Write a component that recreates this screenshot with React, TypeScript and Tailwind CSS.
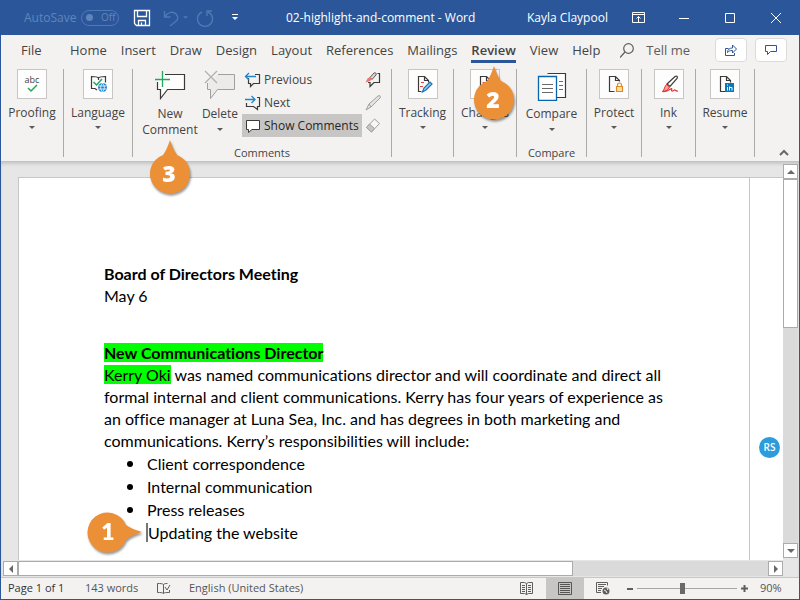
import React from "react";

const tabs = ["Home", "Insert", "Draw", "Design", "Layout", "References", "Mailings", "Review", "View", "Help"];

const Separator = () => <div className="h-[88px] w-px shrink-0 bg-[#acaaa8]" />;

const Caret = () => (
  <svg width="6" height="3" viewBox="0 0 6 3" className="shrink-0">
    <path d="M0 0h6L3 3z" fill="#5c5a58" />
  </svg>
);

/* Orange numbered marker, the tip points up or to the right */
const Callout = ({ n, dir }: { n: string; dir: "up" | "right" }) => (
  <svg width="60" height="60" viewBox="0 0 60 60" className="block drop-shadow-[1px_2px_1px_#00000066]">
    {dir === "up" ? (
      <path d="M30 1c2 6 4 11 7 15a20 20 0 1 1-14 0c3-4 5-9 7-15z" fill="#ec9038" />
    ) : (
      <path d="M58 30c-6 2-12 4-16 8a20 20 0 1 1 0-15c4 3 10 5 16 7z" fill="#ec9038" />
    )}
    <text
      x={dir === "up" ? 29 : 24}
      y={dir === "up" ? 43 : 38}
      textAnchor="middle"
      fontSize="23"
      fontWeight="800"
      fill="#fff"
    >
      {n}
    </text>
  </svg>
);

const icons: Record<string, React.ReactNode> = {
  Proofing: (
    <>
      <text x="14" y="13" textAnchor="middle" fontSize="9" fill="#444">abc</text>
      <path d="M10 18l3 3 6-6" stroke="#22a85a" strokeWidth="1.5" />
    </>
  ),
  Language: (
    <>
      <path d="M14.5 8c-1-1.500-3-1.500-7-1.500v12h3.500l2 1.500M14.5 8c1-1.500 3-1.500 7-1.500v6M14.5 8v2" stroke="#3b3a39" strokeWidth="1.2" />
      <path d="M9.5 12l3 3 5.5-6" stroke="#22a85a" strokeWidth="1.5" />
      <circle cx="18.5" cy="17.5" r="4.5" fill="#1e86d0" />
      <path d="M14.5 16h8M14.5 19h8M18.5 13c-2.500 3-2.500 6 0 9c2.500-3 2.500-6 0-9" stroke="#fff" strokeWidth=".8" />
    </>
  ),
  Tracking: (
    <>
      <path d="M12.5 21.5h-3v-15h6l4 4v2M15.5 6.5v4h4" stroke="#3b3a39" strokeWidth="1.2" />
      <path d="M12 12.5h3M11 16.5h3" stroke="#e8413c" />
      <path d="M13.5 22l1.500-4 6-6 2 2-6 6z" fill="#9bcbf0" stroke="#1e70b8" strokeWidth="1.2" />
    </>
  ),
  Changes: (
    <>
      <path d="M18.5 21.5h-9v-15h6l4 4v11zM15.5 6.5v4h4" stroke="#3b3a39" strokeWidth="1.2" />
      <path d="M11.5 12.5h5M11.5 16.5h5" stroke="#e8413c" strokeWidth="1.2" />
    </>
  ),
  Protect: (
    <>
      <path d="M14.5 21.5h-5v-15h6l4 4v1M15.5 6.5v4h4" stroke="#3b3a39" strokeWidth="1.2" />
      <path d="M17.5 17v-2a2 2 0 0 1 4 0v2" stroke="#e08a2c" strokeWidth="1.2" />
      <path d="M16.5 16.5h6v5h-6z" fill="#ffe29a" stroke="#e08a2c" strokeWidth="1.2" />
    </>
  ),
  Ink: (
    <>
      <path d="M12 14l8-7.500c2-1 3 0 2 2L15 16.500z" fill="#fff" stroke="#3b3a39" strokeWidth="1.2" />
      <path d="M11.500 14.500l3 2.500c-1 3-4 4.500-7 4.500 2-2 2-5 4-7z" fill="#f6a09c" stroke="#e8302c" />
      <path d="M7.500 21.500c5 1 8-3 9-3s-1 3 1 2.500 1.500-1.500 2.500-1 1 1.500 3 1" stroke="#e8302c" strokeWidth="1.2" />
    </>
  ),
  Resume: (
    <>
      <path d="M14 21.5H9.5v-15h6l4 4v2M15.5 6.5v4h4" stroke="#3b3a39" strokeWidth="1.2" />
      <path d="M14 13h9v9h-9z" fill="#0a78b5" />
      <path d="M16.5 17v3.500M16.5 14.500v1M18.500 20.500v-4M18.500 17.500h2.500v3" stroke="#fff" />
    </>
  ),
};

const RibbonMenu = ({ label }: { label: string }) => (
  <button className="flex w-full flex-col items-center">
    <span className="flex size-[30px] items-center justify-center border border-[#c8c6c4] bg-[#fdfdfd]">
      <svg width="28" height="28" viewBox="0 0 28 28" fill="none">{icons[label]}</svg>
    </span>
    <span className="mt-[5px] mb-1 leading-[18px]">{label}</span>
    <Caret />
  </button>
);

const SmallBubble = ({ children, flip }: { children?: React.ReactNode; flip?: boolean }) => (
  <svg width="18" height="17" viewBox="0 0 18 17" fill="none" className="shrink-0">
    {flip ? (
      <path d="M13 3.500h2.500v9h-2v3l-4-3h-7V9" stroke="#3b3a39" strokeWidth="1.2" />
    ) : (
      <path d="M4.500 7v5.500h2v3l3-3h6v-9H11" stroke="#3b3a39" strokeWidth="1.2" />
    )}
    {children}
  </svg>
);

const TitleBar = () => (
  <header className="flex h-[35px] shrink-0 items-center bg-[#2b579a] text-[12px] text-white">
    <div className="flex flex-1 items-center pl-[23px]">
      <span className="w-[57px] text-[#5f85bd]">AutoSave</span>
      <button role="switch" aria-checked="false" aria-label="AutoSave" className="flex h-4 w-[38px] items-center gap-2 rounded-full border border-[#5078b3] pl-1 text-[10px] text-[#5f85bd]">
        <span className="size-[7px] rounded-full bg-[#5f85bd]" />
        Off
      </button>
      <button aria-label="Save" className="ml-3.5">
        <svg width="18" height="18" viewBox="0 0 18 18" fill="none" stroke="#fff" strokeWidth="1.3">
          <path d="M1.500 1.500h15v15h-13l-2-2zM4.500 1.500v6h9v-6M5.500 16.500v-5h7v5M8.500 13.500v3" />
        </svg>
      </button>
      <button aria-label="Undo" className="ml-3 flex items-center gap-1">
        <svg width="16" height="18" viewBox="0 0 16 18" fill="none" stroke="#5078b3" strokeWidth="1.4">
          <path d="M1.500 2v6h6M2 7.500C5 3 10 2 13 5s2 6-1 8l-5 4" />
        </svg>
        <svg width="5" height="3" viewBox="0 0 6 3"><path d="M0 0h6L3 3z" fill="#5078b3" /></svg>
      </button>
      <button aria-label="Redo" className="ml-2">
        <svg width="18" height="18" viewBox="0 0 18 18" fill="none" stroke="#5078b3" strokeWidth="1.4">
          <path d="M11 7V2h5M12 3a7.500 7.500 0 1 1-6 0" />
        </svg>
      </button>
      <button aria-label="Customize Quick Access Toolbar" className="ml-[18px]">
        <svg width="6" height="7" viewBox="0 0 6 7"><path d="M0 0h6v1H0zM0 3h6L3 6z" fill="#fff" /></svg>
      </button>
    </div>
    <h1 className="w-[241px] whitespace-nowrap">02-highlight-and-comment - Word</h1>
    <span className="w-[88px] whitespace-nowrap">Kayla Claypool</span>
    <button aria-label="Ribbon Display Options" className="flex w-[46px] justify-center">
      <svg width="13" height="11" viewBox="0 0 13 11" fill="none" stroke="#fff"><path d="M.5.5h12v10H.5zM.5 2.5h12M6.5 10V4.5M4.5 6.5l2-2 2 2" /></svg>
    </button>
    <button aria-label="Minimize" className="flex w-[46px] justify-center">
      <svg width="10" height="10" viewBox="0 0 10 10" stroke="#fff"><path d="M0 5.5h10" /></svg>
    </button>
    <button aria-label="Maximize" className="flex w-[46px] justify-center">
      <svg width="10" height="10" viewBox="0 0 10 10" fill="none" stroke="#fff"><path d="M.5.5h9v9h-9z" /></svg>
    </button>
    <button aria-label="Close" className="flex w-[46px] justify-center">
      <svg width="10" height="10" viewBox="0 0 10 10" stroke="#fff"><path d="M0 0l10 10M10 0L0 10" /></svg>
    </button>
  </header>
);

const TabRow = () => (
  <nav className="flex h-[34px] shrink-0 items-start text-[13px]">
    <button className="w-[69px] pl-5 text-left leading-[31px]">File</button>
    <div className="flex gap-3.5">
      {tabs.map(tab => (
        <div key={tab} className="relative">
          {tab === "Review" ? (
            <>
              <button className="h-[28px] border-b-[3px] border-[#2b579a] pt-[6px] leading-[19px] font-semibold">{tab}</button>
              <div className="pointer-events-none absolute top-[30px] left-1/2 z-10 -ml-[30px]">
                <Callout n="2" dir="up" />
              </div>
            </>
          ) : (
            <button className="leading-[31px]">{tab}</button>
          )}
        </div>
      ))}
    </div>
    <button className="ml-5 flex items-center gap-3 leading-[31px] whitespace-nowrap text-[#605e5c]">
      <svg width="14" height="15" viewBox="0 0 14 15" fill="none" stroke="#605e5c" strokeWidth="1.2"><circle cx="8.5" cy="5.5" r="4.8" /><path d="M5 9l-5 5.500" /></svg>
      Tell me
    </button>
    <div className="mt-[3px] mr-3 ml-auto flex gap-2">
      <button aria-label="Share" className="flex h-6 w-8 items-center justify-center rounded-sm border border-[#dddbd9] bg-white">
        <svg width="12" height="12" viewBox="0 0 12 12" fill="none" stroke="#2b579a"><path d="M3.5 4.5h-3v7h9V9M2.5 8.500c0-3 2-4.500 5-4.500V1l4 4-4 4V6.500C5 6.500 4 7 2.500 8.500z" /></svg>
      </button>
      <button aria-label="Comments" className="flex h-6 w-8 items-center justify-center rounded-sm border border-[#dddbd9] bg-white">
        <svg width="12" height="12" viewBox="0 0 12 12" fill="none" stroke="#2b579a"><path d="M.5 1.5h11v6H5.500l-3 3v-3h-2z" /></svg>
      </button>
    </div>
  </nav>
);

const CommentsGroup = () => (
  <div className="flex w-[258px] shrink-0 flex-col">
    <div className="flex h-[76px] pl-2">
      <div className="relative w-[58px]">
        <button className="flex w-full flex-col items-center leading-4">
          <svg width="32" height="32" viewBox="0 0 32 32" fill="none">
            <path d="M11 5.500h19.500v15H13.500l-7 9v-9h-3V12" fill="#fdfdfd" />
            <path d="M11 5.500h19.500v15H13.500l-7 9v-9h-3V13" stroke="#3b3a39" strokeWidth="1.2" />
            <path d="M8.500 2v16M1 10.500h15" stroke="#22a85a" strokeWidth="1.3" />
          </svg>
          <span className="mt-[5px]">New Comment</span>
        </button>
        <div className="pointer-events-none absolute top-[70px] left-1/2 z-10 -ml-[30px]">
          <Callout n="3" dir="up" />
        </div>
      </div>
      <button className="flex w-[42px] flex-col items-center leading-4 whitespace-nowrap">
        <svg width="32" height="32" viewBox="0 0 32 32" fill="none">
          <path d="M14 5.500h16.500v15H13.500l-7 9v-9h-3V14l4-4z" fill="#edebe9" />
          <path d="M14 5.500h16.500v15H13.500l-7 9v-9h-3V14" stroke="#a19f9d" />
          <path d="M1 2l12 12M13 2L1 14" stroke="#b3b0ad" strokeWidth="1.3" />
        </svg>
        <span className="mt-[5px] mb-1.5">Delete</span>
        <Caret />
      </button>
      <div className="-mt-px ml-px flex w-[120px] flex-col whitespace-nowrap">
        <button className="flex h-[23px] items-center gap-0.5 pl-0.5">
          <SmallBubble><path d="M1 5.500h11M5 2L1.500 5.500 5 9" stroke="#1e86d0" strokeWidth="1.3" /></SmallBubble>
          Previous
        </button>
        <button className="flex h-[23px] items-center gap-0.5 pl-0.5">
          <SmallBubble flip><path d="M1 5.500h10M7.500 2L11 5.500 7.500 9" stroke="#1e86d0" strokeWidth="1.3" /></SmallBubble>
          Next
        </button>
        <button aria-pressed="true" className="flex h-[23px] items-center gap-0.5 bg-[#c8c6c4] pl-0.5 text-[#262626]">
          <svg width="18" height="17" viewBox="0 0 18 17" fill="none" className="shrink-0"><path d="M2.500 3.500h13v9H8l-3.500 3v-3h-2z" fill="#fff" stroke="#3b3a39" /></svg>
          Show Comments
        </button>
      </div>
      <div className="-mt-px ml-[3px] flex flex-col">
        <button aria-label="Ink Comment" className="flex h-[23px] items-center">
          <svg width="17" height="17" viewBox="0 0 17 17" fill="none"><path d="M12.500 2.500h2v9H9l-4 4v-4H3" stroke="#3b3a39" strokeWidth="1.2" /><path d="M5 6.500L9 2c1-1 3 .5 2 2L7 8.500z" fill="#d8d6d4" stroke="#5c5a58" /><path d="M.5 11.500L2.500 7.500l2.500-1.500 2 2L5 10z" fill="#f0736c" /></svg>
        </button>
        <button aria-label="Pen" className="flex h-[23px] items-center">
          <svg width="17" height="17" viewBox="0 0 17 17" fill="none" stroke="#a19f9d"><path d="M1 16l3-6 9-8c2-1 3 0 2 2l-9 9zM4 10l2 3" fill="#e6e4e2" /></svg>
        </button>
        <button aria-label="Eraser" className="flex h-[23px] items-center">
          <svg width="17" height="17" viewBox="0 0 17 17" fill="none" stroke="#a19f9d"><path d="M1.500 10.500l8-8.500 5 4.500-8 8.500z" fill="#f8f7f6" /><path d="M1.500 10.500l3-3.500 5 4.500-3 3.500z" fill="#c8c6c4" /></svg>
        </button>
      </div>
    </div>
    <div className="text-center text-[11px] leading-4">Comments</div>
  </div>
);

const Ribbon = () => (
  <div className="flex h-[92px] shrink-0 text-[12px]">
    <div className="w-[62px] shrink-0"><RibbonMenu label="Proofing" /></div>
    <Separator />
    <div className="w-[68px] shrink-0"><RibbonMenu label="Language" /></div>
    <Separator />
    <CommentsGroup />
    <Separator />
    <div className="w-[61px] shrink-0"><RibbonMenu label="Tracking" /></div>
    <Separator />
    <div className="w-[62px] shrink-0"><RibbonMenu label="Changes" /></div>
    <Separator />
    <div className="flex w-[69px] shrink-0 flex-col">
      <button className="flex h-[76px] w-full flex-col items-center leading-4">
        <svg width="32" height="32" viewBox="0 0 32 32" fill="none">
          <path d="M11.5 4.500h18v24h-9" fill="#fff" stroke="#3b3a39" strokeWidth="1.2" />
          <path d="M2.500 7.500h18v24h-18z" fill="#fff" stroke="#0a64ad" strokeWidth="1.3" />
          <path d="M6 15.500h11M6 19.500h11M6 23.500h11M23 12.500h4M23 16.500h4M23 20.500h4" stroke="#6b6967" />
        </svg>
        <span className="mt-[5px] mb-1.5">Compare</span>
        <Caret />
      </button>
      <div className="text-center text-[11px] leading-4">Compare</div>
    </div>
    <Separator />
    <div className="w-[54px] shrink-0"><RibbonMenu label="Protect" /></div>
    <Separator />
    <div className="w-[53px] shrink-0"><RibbonMenu label="Ink" /></div>
    <Separator />
    <div className="w-[58px] shrink-0"><RibbonMenu label="Resume" /></div>
    <Separator />
    <button aria-label="Collapse the Ribbon" className="mr-2.5 mb-1 ml-auto self-end">
      <svg width="10" height="9" viewBox="0 0 10 9" fill="none" stroke="#6b6967" strokeWidth="2"><path d="M1 7l4-4 4 4" /></svg>
    </button>
  </div>
);

const ScrollButton = ({ label, d }: { label: string; d: string }) => (
  <button aria-label={label} className="flex size-[15px] shrink-0 items-center justify-center border border-[#ababab] bg-white">
    <svg width="8" height="8" viewBox="0 0 8 8"><path d={d} fill="#6b6967" /></svg>
  </button>
);

const Document = () => (
  <article className="flex-1 border-r border-[#c6c6c6] pt-[85px] pr-[80px] pl-[85px] font-[Lato,'Open_Sans',sans-serif] text-[16px] leading-[22px] text-black [font-variant-ligatures:none]">
    <h2 className="font-bold">Board of Directors Meeting</h2>
    <p>May 6</p>
    <h2 className="mt-[35px] font-bold"><mark className="bg-[#00ff00]">New Communications Director</mark></h2>
    <p className="whitespace-nowrap">
      <mark className="bg-[#00ff00]">Kerry Oki</mark> was named communications director and will coordinate and direct all<br />
      formal internal and client communications. Kerry has four years of experience as<br />
      an office manager at Luna Sea, Inc. and has degrees in both marketing and<br />
      communications. Kerry’s responsibilities will include:
    </p>
    <ul className="leading-[23px]">
      {["Client correspondence", "Internal communication", "Press releases"].map(item => (
        <li key={item} className="flex items-center">
          <span className="mr-[14px] ml-[23px] size-1.5 rounded-full bg-black" />
          {item}
        </li>
      ))}
      <li className="relative pl-[42px]">
        <span className="border-l-2 border-[#767676]">Updating the website</span>
        <div className="pointer-events-none absolute top-1/2 left-[-20px] -mt-[31px]">
          <Callout n="1" dir="right" />
        </div>
      </li>
    </ul>
  </article>
);

const StatusBar = () => (
  <footer className="flex h-[22px] shrink-0 items-center border-t border-[#c6c6c6] pl-[7px] text-[11px] whitespace-nowrap text-[#555]">
    <span className="w-[77px] text-[#333]">Page 1 of 1</span>
    <span className="w-[71px]">143 words</span>
    <button aria-label="Proofing errors" className="w-[33px]">
      <svg width="15" height="13" viewBox="0 0 15 13" fill="none" stroke="#605e5c"><path d="M7.500 2.500c-1-1-3-1-6-1v9c3 0 5 0 6 1v-9c1-1 2-1 4-1M7.500 11.500c1-1 2-1 6-1V8M9 5l2 3 3-5" /></svg>
    </button>
    <span>English (United States)</span>
    <div className="ml-auto flex h-full items-center">
      <button aria-label="Read Mode" className="flex h-full w-[38px] items-center justify-center">
        <svg width="14" height="13" viewBox="0 0 14 13" fill="none" stroke="#605e5c"><path d="M6.500 1.500v11M.5.5h4l2 1 2-1h4v11h-4l-2 1-2-1h-4z" /><path d="M2 3.500h3M2 5.500h3M2 7.500h3M2 9.500h3M8 3.500h3M8 5.500h3M8 7.500h3M8 9.500h3" /></svg>
      </button>
      <button aria-label="Print Layout" aria-pressed="true" className="flex h-full w-[38px] items-center justify-center bg-[#c8c6c4]">
        <svg width="14" height="13" viewBox="0 0 14 13" fill="none" stroke="#555"><path d="M.5.5h13v12H.5zM2 2.500h10M2 4.500h10M2 6.500h10M2 8.500h10M2 10.500h10" /></svg>
      </button>
      <button aria-label="Web Layout" className="flex h-full w-[38px] items-center justify-center">
        <svg width="14" height="13" viewBox="0 0 14 13" fill="none" stroke="#605e5c"><path d="M5 10.500H.5V.5h11v3M2 2.500h8M2 4.500h6M2 6.500h4M2 8.500h3" /><circle cx="10" cy="9" r="3.500" fill="#605e5c" stroke="none" /><path d="M8 8l2 1 1 2M11 6l1 2" stroke="#f3f2f1" /></svg>
      </button>
      <button aria-label="Zoom Out" className="mr-1 ml-[5px] h-0.5 w-[6px] bg-[#605e5c]" />
      <input
        type="range"
        aria-label="Zoom"
        min="10"
        max="190"
        defaultValue="92"
        className="h-[11px] w-[100px] appearance-none bg-[linear-gradient(#a6a6a6,#a6a6a6)] bg-[length:100%_1px] bg-center bg-no-repeat [&::-webkit-slider-thumb]:h-[11px] [&::-webkit-slider-thumb]:w-[5px] [&::-webkit-slider-thumb]:appearance-none [&::-webkit-slider-thumb]:bg-[#6b6967]"
      />
      <button aria-label="Zoom In" className="mr-3 ml-1">
        <svg width="7" height="7" viewBox="0 0 7 7" stroke="#605e5c" strokeWidth="2"><path d="M0 3.500h7M3.500 0v7" /></svg>
      </button>
      <span className="w-[39px]">90%</span>
    </div>
  </footer>
);

const App: React.FC = () => (
  <div className="flex h-screen flex-col overflow-hidden border border-t-0 border-[#2b579a] bg-[#f3f2f1] font-['Open_Sans','Noto_Sans',sans-serif] text-[#444]">
    <TitleBar />
    <TabRow />
    <Ribbon />
    <main className="flex min-h-0 flex-1 flex-col bg-[#e6e6e6] shadow-[inset_0_4px_4px_-2px_#00000033]">
      <div className="flex min-h-0 flex-1">
        <div className="flex min-w-0 flex-1 pt-4 pl-[17px]">
          <div className="flex min-w-0 flex-1 border-t border-l border-[#c6c6c6] bg-white">
            <Document />
            <aside className="w-[33px] shrink-0 pt-[255px] pl-[9px]">
              <button aria-label="Comment by RS" className="size-[21px] rounded-full bg-[#2e9bdb] text-[10px] font-semibold text-white">RS</button>
            </aside>
          </div>
        </div>
        <div className="flex w-4 shrink-0 flex-col pt-[3px] pb-0.5">
          <ScrollButton label="Scroll up" d="M0 6h8L4 2z" />
          <div className="w-[15px] flex-1 bg-[#dadada]">
            <div className="h-[41%] border border-[#ababab] bg-white" />
          </div>
          <ScrollButton label="Scroll down" d="M0 2h8L4 6z" />
        </div>
      </div>
      <div className="mr-4 flex h-[17px] shrink-0 pt-px pl-0.5">
        <ScrollButton label="Scroll left" d="M6 0v8L2 4z" />
        <div className="h-[15px] flex-1 bg-[#dadada]">
          <div className="h-full w-[74%] border border-[#ababab] bg-white" />
        </div>
        <ScrollButton label="Scroll right" d="M2 0v8l4-4z" />
      </div>
    </main>
    <StatusBar />
  </div>
);

export default App;
